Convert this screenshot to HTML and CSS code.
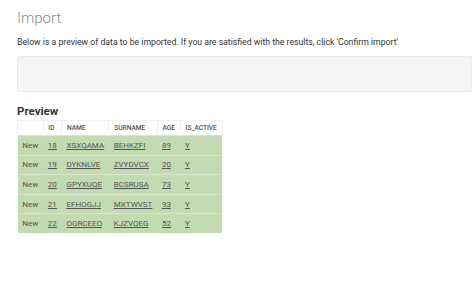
FILE: index.html
```html
<!DOCTYPE html>
<html lang="en">
<head>
    <meta charset="UTF-8">
    <title>Import</title>
    <link rel="stylesheet" href="styles.css">
</head>
<body>
    <div class="page">
        <h1>Import</h1>
        <p class="description">Below is a preview of data to be imported. If you are satisfied with the results, click 'Confirm import'</p>
        <div class="actions"></div>
        <h2>Preview</h2>
        <table class="preview">
            <thead>
                <tr>
                    <th></th>
                    <th>ID</th>
                    <th>NAME</th>
                    <th>SURNAME</th>
                    <th>AGE</th>
                    <th>IS_ACTIVE</th>
                </tr>
            </thead>
            <tbody>
                <tr class="new"><td>New</td><td><a href="#">18</a></td><td><a href="#">XSXQAMA</a></td><td><a href="#">BEHKZFI</a></td><td><a href="#">89</a></td><td><a href="#">Y</a></td></tr>
                <tr class="new"><td>New</td><td><a href="#">19</a></td><td><a href="#">DYKNLVE</a></td><td><a href="#">ZVYDVCX</a></td><td><a href="#">20</a></td><td><a href="#">Y</a></td></tr>
                <tr class="new"><td>New</td><td><a href="#">20</a></td><td><a href="#">GPYXUQE</a></td><td><a href="#">BCSRUSA</a></td><td><a href="#">73</a></td><td><a href="#">Y</a></td></tr>
                <tr class="new"><td>New</td><td><a href="#">21</a></td><td><a href="#">EFHOGJJ</a></td><td><a href="#">MXTWVST</a></td><td><a href="#">93</a></td><td><a href="#">Y</a></td></tr>
                <tr class="new"><td>New</td><td><a href="#">22</a></td><td><a href="#">OGRCEEO</a></td><td><a href="#">KJZVQEG</a></td><td><a href="#">52</a></td><td><a href="#">Y</a></td></tr>
            </tbody>
        </table>
    </div>
</body>
</html>
```

FILE: styles.css
```css
body {
    font-family: Roboto, "Liberation Sans", sans-serif;
    background-color: #fff;
    margin: 0;
    padding: 0;
    color: #333;
}
.page {
    padding: 9px 2px 0 17px;
}
h1 {
    margin: 0;
    font-size: 15px;
    font-weight: 300;
    color: #8a8a8a;
    line-height: 18px;
}
.description {
    margin: 10px 0 0;
    font-size: 8.7px;
    line-height: 11px;
    color: #333;
}
.actions {
    margin-top: 8px;
    height: 34px;
    background-color: #f5f5f5;
    border: 1px solid #ececec;
    border-radius: 2px;
}
h2 {
    margin: 12px 0 0;
    font-size: 11.5px;
    font-weight: bold;
    line-height: 14px;
    color: #333;
}
.preview {
    margin-top: 2px;
    border-collapse: collapse;
    font-size: 8px;
}
.preview th {
    font-size: 6.6px;
    font-weight: 500;
    color: #555;
    text-align: left;
    padding: 0 4.8px;
    height: 14px;
    background-color: #fff;
    border: 1px solid #f0f0f0;
    border-bottom: none;
}
.preview td {
    padding: 0 4.8px;
    height: 18.6px;
    color: #555;
    border-top: 1px solid #d8e6cf;
}
.preview tr.new {
    background-color: #c3dbb2;
}
.preview a {
    color: #555;
    text-decoration: underline;
}
```
